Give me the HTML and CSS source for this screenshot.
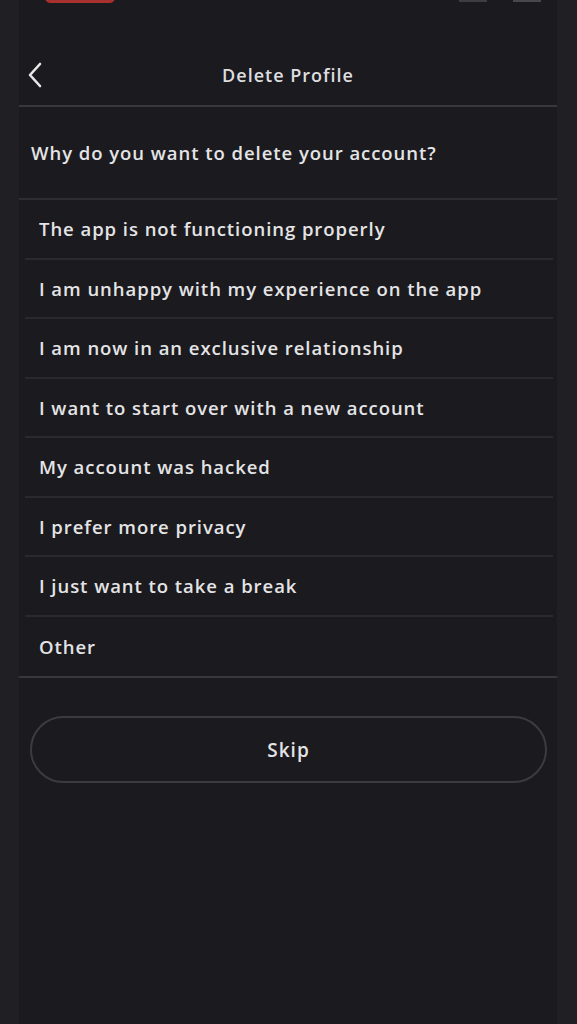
FILE: index.html
```html
<!DOCTYPE html>
<html lang="en">

<head>
    <meta charset="UTF-8">
    <meta name="viewport" content="width=device-width, initial-scale=1.0">
    <title>Delete Profile</title>

    <link rel="stylesheet" href="styles.css">
</head>

<body>
    <div class="statusBar">
        <div class="recPill"></div>
        <div class="statusIcons">
            <span class="sig"></span>
            <span class="batt"></span>
        </div>
    </div>

    <div class="main">
        <div class="topBar">
            <div class="backBtn">
                <svg width="16" height="26" viewBox="0 0 16 26">
                    <path d="M13 2 L3 13 L13 24" fill="none" stroke="#e8e8e8" stroke-width="2.6" stroke-linecap="round" stroke-linejoin="round" />
                </svg>
            </div>
            <h1>Delete Profile</h1>
        </div>

        <div class="question">Why do you want to delete your account?</div>

        <ul class="reasons">
            <li>The app is not functioning properly</li>
            <li>I am unhappy with my experience on the app</li>
            <li>I am now in an exclusive relationship</li>
            <li>I want to start over with a new account</li>
            <li>My account was hacked</li>
            <li>I prefer more privacy</li>
            <li>I just want to take a break</li>
            <li>Other</li>
        </ul>

        <div class="btnRow">
            <div class="skipBtn">Skip</div>
        </div>
    </div>
</body>

</html>
```

FILE: styles.css
```css
* {
    box-sizing: border-box;
}

body {
    margin: 0;
    background-color: #201f23;
    font-family: "Open Sans", "Noto Sans", sans-serif;
    color: #e4e4e6;
    height: 1024px;
    overflow: hidden;
    position: relative;
}

.statusBar {
    height: 45px;
    position: absolute;
    top: 0;
    left: 0;
    right: 0;
}

.recPill {
    position: absolute;
    left: 45px;
    top: -8px;
    width: 70px;
    height: 11px;
    border-radius: 6px;
    background-color: #a8302f;
}

.statusIcons {
    position: absolute;
    right: 36px;
    top: 0;
    display: flex;
    gap: 26px;
}

.sig {
    width: 28px;
    height: 2px;
    background-color: #3e3d41;
}

.batt {
    width: 28px;
    height: 2px;
    background-color: #48474b;
}

.main {
    margin: 0 20px 0 19px;
    padding-top: 45px;
    min-height: 1024px;
    background-color: #1b1a1e;
}

.topBar {
    height: 62px;
    display: flex;
    align-items: center;
    justify-content: center;
    position: relative;
    border-bottom: 2px solid #38373b;
}

.backBtn {
    position: absolute;
    left: 8px;
    top: 17px;
}

h1 {
    margin: 0;
    font-size: 18px;
    font-weight: 600;
    letter-spacing: 1px;
    color: #dedee0;
}

.question {
    height: 93px;
    padding-left: 12px;
    display: flex;
    align-items: center;
    font-size: 18.5px;
    font-weight: 600;
    letter-spacing: 0.95px;
    border-bottom: 2px solid #2e2d31;
}

.reasons {
    list-style: none;
    margin: 0;
    padding: 0;
    border-bottom: 2px solid #38373b;
}

.reasons li {
    height: 59.5px;
    margin: 0 4px 0 6px;
    padding-left: 14px;
    display: flex;
    align-items: center;
    font-size: 18.5px;
    font-weight: 600;
    letter-spacing: 0.95px;
    border-bottom: 2px solid #2a292d;
}

.reasons li:last-child {
    border-bottom: none;
}

.btnRow {
    padding: 38px 10px 0 11px;
}

.skipBtn {
    height: 67px;
    border: 2px solid #3c3b3f;
    border-radius: 34px;
    display: flex;
    align-items: center;
    justify-content: center;
    font-size: 19px;
    font-weight: 600;
    letter-spacing: 1px;
}
```
